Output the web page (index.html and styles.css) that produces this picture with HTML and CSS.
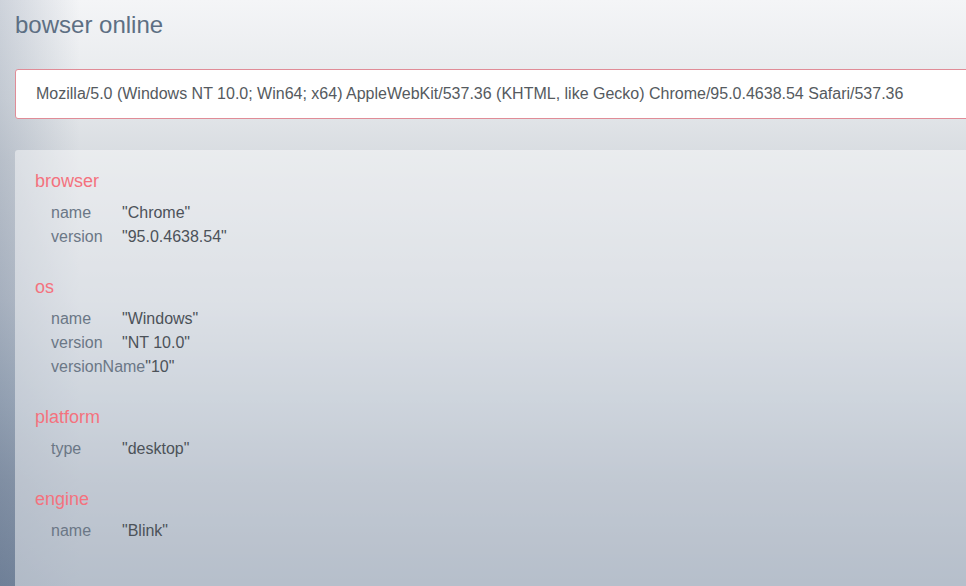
FILE: index.html
```html
<!DOCTYPE html>
<html lang="en">
<head>
<meta charset="utf-8">
<title>bowser online</title>
<link rel="stylesheet" href="styles.css">
</head>
<body>
<div class="page">
  <h1 class="title">bowser online</h1>
  <div class="ua-input">Mozilla/5.0 (Windows NT 10.0; Win64; x64) AppleWebKit/537.36 (KHTML, like Gecko) Chrome/95.0.4638.54 Safari/537.36</div>
  <div class="result">
    <section class="group">
      <div class="group-title">browser</div>
      <div class="row"><span class="key">name</span><span class="val">"Chrome"</span></div>
      <div class="row"><span class="key">version</span><span class="val">"95.0.4638.54"</span></div>
    </section>
    <section class="group">
      <div class="group-title">os</div>
      <div class="row"><span class="key">name</span><span class="val">"Windows"</span></div>
      <div class="row"><span class="key">version</span><span class="val">"NT 10.0"</span></div>
      <div class="row"><span class="key">versionName</span><span class="val">"10"</span></div>
    </section>
    <section class="group">
      <div class="group-title">platform</div>
      <div class="row"><span class="key">type</span><span class="val">"desktop"</span></div>
    </section>
    <section class="group">
      <div class="group-title">engine</div>
      <div class="row"><span class="key">name</span><span class="val">"Blink"</span></div>
    </section>
  </div>
</div>
</body>
</html>
```

FILE: styles.css
```css
html {
  height: 100%;
  overflow: hidden;
  background:
    linear-gradient(to right, rgba(70, 90, 120, 0.22) 0px, rgba(70, 90, 120, 0) 80px),
    linear-gradient(to bottom,
      #f4f5f7 0px,
      #e5e8eb 100px,
      #d7dbe0 160px,
      #c1c8d2 300px,
      #a6b2c1 400px,
      #909daf 480px,
      #7a8aa0 586px);
}

body {
  margin: 0;
  height: 100%;
  font-family: "Liberation Sans", Arial, sans-serif;
}

.page {
  height: 100%;
  box-sizing: border-box;
  display: flex;
  flex-direction: column;
  padding: 11px 0 0 15px;
}

.title {
  margin: 0;
  font-size: 24px;
  font-weight: normal;
  line-height: 28px;
  color: #5d6f83;
}

.ua-input {
  margin-top: 30px;
  width: calc(100% + 20px);
  box-sizing: border-box;
  height: 50px;
  flex: none;
  display: flex;
  align-items: center;
  padding: 0 20px;
  background: #fff;
  border: 1px solid #e08c97;
  border-radius: 3px;
  font-size: 16px;
  color: #555a60;
  white-space: nowrap;
}

.result {
  flex: 1;
  margin-top: 31px;
  width: calc(100% + 20px);
  box-sizing: border-box;
  padding: 19px 20px 0;
  background: rgba(255, 255, 255, 0.45);
  border-radius: 3px 0 0 0;
}

.group + .group {
  margin-top: 26px;
}

.group-title {
  font-size: 18px;
  line-height: 24px;
  color: #f4727e;
  margin-bottom: 8px;
}

.row {
  display: flex;
  padding-left: 16px;
  font-size: 16px;
  line-height: 24px;
}

.key {
  min-width: 71px;
  color: #6b7786;
}

.val {
  color: #4c5259;
}
```
